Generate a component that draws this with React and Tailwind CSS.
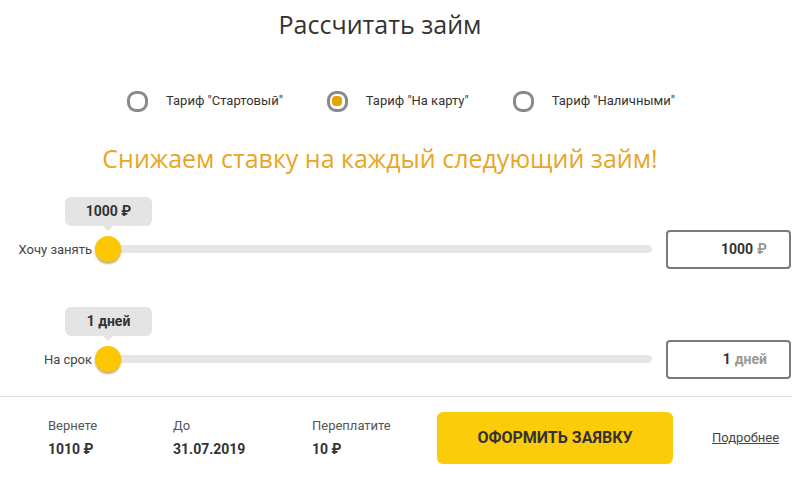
import React from "react";

function Radio({ checked, label }) {
  return (
    <div className="flex items-center gap-[18px]">
      <div className="w-[21px] h-[21px] rounded-[9px] border-[3px] border-[#8a8a8a] flex items-center justify-center bg-white">
        {checked && <div className="w-[10px] h-[10px] rounded-[4px] bg-[#e6a400]" />}
      </div>
      <span className="text-[13px] text-[#333] leading-[18px]">{label}</span>
    </div>
  );
}

function SliderRow({ label, tip, value, unit, className }) {
  return (
    <div className={"flex items-center h-[40px] " + className}>
      <div className="w-[92px] text-right text-[13px] text-[#444] pt-[2px]">{label}</div>
      <div className="ml-[3px] w-[557px] h-[8px] rounded-full bg-[#e6e6e6] relative">
        <div className="absolute left-[-30px] bottom-[27px] w-[87px] h-[29px] rounded-[6px] bg-[#e4e4e4] flex items-center justify-center text-[14px] font-bold text-[#333]">
          {tip}
          <div className="absolute left-[38px] bottom-[-5px] w-0 h-0 border-l-[5px] border-r-[5px] border-t-[5px] border-l-transparent border-r-transparent border-t-[#e4e4e4]" />
        </div>
        <div className="absolute left-0 top-1/2 -translate-y-1/2 w-[26px] h-[26px] rounded-full bg-[#fcc602] shadow-[0_2px_2px_rgba(150,110,0,0.55)]" />
      </div>
      <div className="ml-[14px] w-[125px] h-[39px] border-2 border-[#7a7a7a] rounded-[4px] flex items-center justify-end pr-[22px] text-[14px] font-bold">
        <span className="text-[#333]">{value}</span>
        <span className="text-[#999] ml-[4px]">{unit}</span>
      </div>
    </div>
  );
}

export default function App() {
  return (
    <div className="w-[800px] h-[479px] bg-white overflow-hidden" style={{ fontFamily: "Roboto, 'Liberation Sans', sans-serif" }}>
      <div className="w-[760px] pt-[8px] text-center text-[25px] leading-[32px] text-[#333]" style={{ fontFamily: "'Open Sans', sans-serif" }}>
        Рассчитать займ
      </div>
      <div className="mt-[51px] pl-[127px] flex items-center gap-[44px] h-[20px]">
        <Radio label={'Тариф "Стартовый"'} />
        <Radio checked label={'Тариф "На карту"'} />
        <Radio label={'Тариф "Наличными"'} />
      </div>
      <div className="mt-[31px] w-[760px] text-center text-[25px] leading-[32px] text-[#e9a526]" style={{ fontFamily: "'Open Sans', sans-serif" }}>
        Снижаем ставку на каждый следующий займ!
      </div>
      <SliderRow className="mt-[55px]" label="Хочу занять" tip="1000 ₽" value="1000" unit="₽" />
      <SliderRow className="mt-[70px]" label="На срок" tip="1 дней" value="1" unit="дней" />
      <div className="mt-[17px] w-[792px] border-t border-[#dedede]" />
      <div className="pt-[15px] pl-[48px] flex items-start">
        <div className="w-[125px] mt-[5px]">
          <div className="text-[13px] leading-[18px] text-[#555]">Вернете</div>
          <div className="mt-[5px] text-[14px] leading-[18px] font-bold text-[#333]">1010 ₽</div>
        </div>
        <div className="w-[139px] mt-[5px]">
          <div className="text-[13px] leading-[18px] text-[#555]">До</div>
          <div className="mt-[5px] text-[14px] leading-[18px] font-bold text-[#333]">31.07.2019</div>
        </div>
        <div className="w-[125px] mt-[5px]">
          <div className="text-[13px] leading-[18px] text-[#555]">Переплатите</div>
          <div className="mt-[5px] text-[14px] leading-[18px] font-bold text-[#333]">10 ₽</div>
        </div>
        <button className="w-[236px] h-[52px] rounded-[6px] bg-[#fccb0a] text-[16px] font-bold text-[#333] uppercase">
          Оформить заявку
        </button>
        <a className="ml-[39px] mt-[17px] text-[13px] leading-[18px] text-[#444] underline">Подробнее</a>
      </div>
    </div>
  );
}
